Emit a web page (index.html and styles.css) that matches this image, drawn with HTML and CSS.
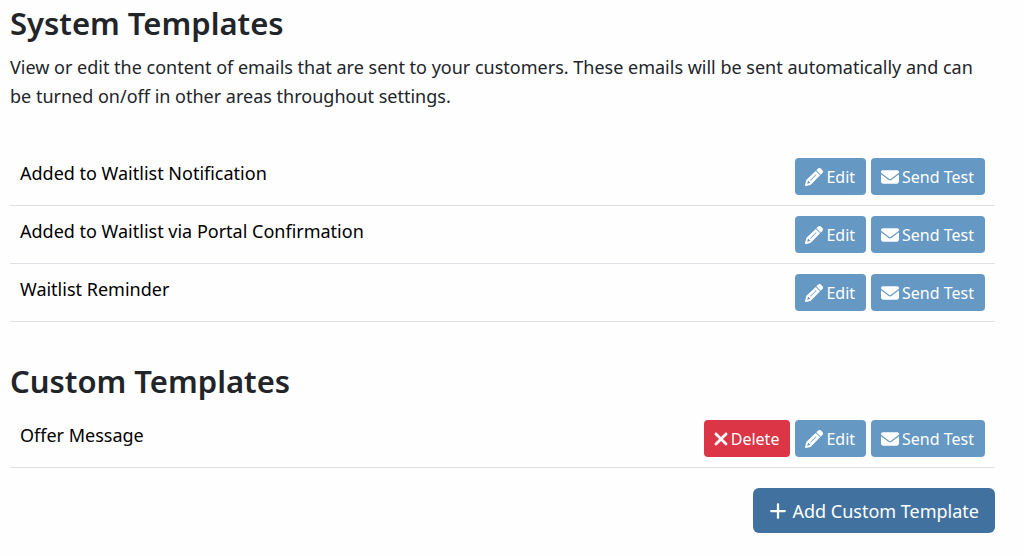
FILE: index.html
```
<!DOCTYPE html>
<html lang="en">
<head>
    <meta charset="UTF-8">
    <meta name="viewport" content="width=device-width, initial-scale=1.0">
    <title>Email Templates</title>
    <link rel="stylesheet" href="styles.css">
</head>
<body>
    <svg class="sprite" aria-hidden="true">
        <symbol id="pencil" viewBox="0 0 512 512"><path fill-rule="evenodd" d="M368 18c25-25 65-25 90 0l36 36c25 25 25 65 0 90l-48 48-126-126zM304 82l126 126-244 250c-10 10-22 18-36 22L30 510c-8 2-17 0-23-6s-8-15-6-23l33-123c4-14 12-26 22-36zM86 372l-24 78 78-24v-28h-26v-26zM320 186c-4-4-10-4-14 0L152 340c-4 4-4 10 0 14s10 4 14 0l154-154c4-4 4-10 0-14z"/></symbol>
        <symbol id="envelope" viewBox="0 0 512 512"><path d="M48 64C22 64 0 86 0 112c0 15 7 29 19 38l218 164c11 8 27 8 38 0l218-164c12-9 19-23 19-38 0-26-22-48-48-48H48zM0 176v208c0 35 29 64 64 64h384c35 0 64-29 64-64V176L294 339c-22 18-54 18-76 0L0 176z"/></symbol>
        <symbol id="xmark" viewBox="0 0 384 512"><path d="M363 140c15-15 15-40 0-55s-40-15-55 0L192 201 76 85c-15-15-40-15-55 0s-15 40 0 55l116 116L21 372c-15 15-15 40 0 55s40 15 55 0l116-116 116 116c15 15 40 15 55 0s15-40 0-55L247 256l116-116z"/></symbol>
        <symbol id="plus" viewBox="0 0 448 512"><path d="M256 64c0-18-14-32-32-32s-32 14-32 32v160H32c-18 0-32 14-32 32s14 32 32 32h160v160c0 18 14 32 32 32s32-14 32-32V288h160c18 0 32-14 32-32s-14-32-32-32H256V64z"/></symbol>
    </svg>
    <main class="page">
        <section class="system">
            <h2>System Templates</h2>
            <p class="intro">View or edit the content of emails that are sent to your customers. These emails will be sent automatically and can be turned on/off in other areas throughout settings.</p>
            <table class="templates">
                <tr>
                    <td>Added to Waitlist Notification</td>
                    <td class="actions">
                        <div class="btns">
                            <button type="button" class="btn"><svg class="icon"><use href="#pencil"/></svg>Edit</button>
                            <button type="button" class="btn"><svg class="icon"><use href="#envelope"/></svg>Send Test</button>
                        </div>
                    </td>
                </tr>
                <tr>
                    <td>Added to Waitlist via Portal Confirmation</td>
                    <td class="actions">
                        <div class="btns">
                            <button type="button" class="btn"><svg class="icon"><use href="#pencil"/></svg>Edit</button>
                            <button type="button" class="btn"><svg class="icon"><use href="#envelope"/></svg>Send Test</button>
                        </div>
                    </td>
                </tr>
                <tr>
                    <td>Waitlist Reminder</td>
                    <td class="actions">
                        <div class="btns">
                            <button type="button" class="btn"><svg class="icon"><use href="#pencil"/></svg>Edit</button>
                            <button type="button" class="btn"><svg class="icon"><use href="#envelope"/></svg>Send Test</button>
                        </div>
                    </td>
                </tr>
            </table>
        </section>
        <section class="custom">
            <h2>Custom Templates</h2>
            <table class="templates">
                <tr>
                    <td>Offer Message</td>
                    <td class="actions">
                        <div class="btns">
                            <button type="button" class="btn btn-danger"><svg class="icon icon-x"><use href="#xmark"/></svg>Delete</button>
                            <button type="button" class="btn"><svg class="icon"><use href="#pencil"/></svg>Edit</button>
                            <button type="button" class="btn"><svg class="icon"><use href="#envelope"/></svg>Send Test</button>
                        </div>
                    </td>
                </tr>
            </table>
            <div class="footer">
                <button type="button" class="btn btn-add"><svg class="icon"><use href="#plus"/></svg>Add Custom Template</button>
            </div>
        </section>
    </main>
</body>
</html>
```
FILE: styles.css
```
* { margin: 0; padding: 0; box-sizing: border-box; }
body {
    font-family: "Noto Sans", "Open Sans", sans-serif;
    font-size: 18px;
    line-height: 29px;
    color: #212529;
    background-color: #fefefe;
}
.sprite {
    display: none;
}
.page {
    padding: 3px 29px 24px 10px;
}
h2 {
    font-size: 31px;
    font-weight: 600;
    line-height: 40px;
    margin-bottom: 10px;
}
.intro {
    margin-bottom: 37px;
}
.templates {
    width: 100%;
    border-collapse: collapse;
    color: #000;
    line-height: 31px;
}
.templates td {
    padding: 10px;
    vertical-align: top;
    border-bottom: 1px solid #dee2e6;
}
.btns {
    display: flex;
    justify-content: flex-end;
    gap: 5px;
}
.btn {
    display: flex;
    align-items: center;
    gap: 3px;
    height: 37px;
    padding: 0 11px 0 10px;
    border: 0;
    border-radius: 4px;
    font-family: inherit;
    font-size: 16px;
    color: #fff;
    background-color: #6698c4;
    white-space: nowrap;
}
.btn-danger {
    background-color: #dc3545;
}
.icon {
    width: 18px;
    height: 18px;
    fill: currentColor;
}
.icon-x {
    width: 14px;
}
.custom {
    margin-top: 39px;
}
.custom h2 {
    margin-bottom: 9px;
}
.footer {
    display: flex;
    justify-content: flex-end;
    margin-top: 20px;
}
.btn-add {
    gap: 5px;
    height: 45px;
    padding: 0 16px;
    border-radius: 6px;
    font-size: 18px;
    background-color: #41729f;
}
```
